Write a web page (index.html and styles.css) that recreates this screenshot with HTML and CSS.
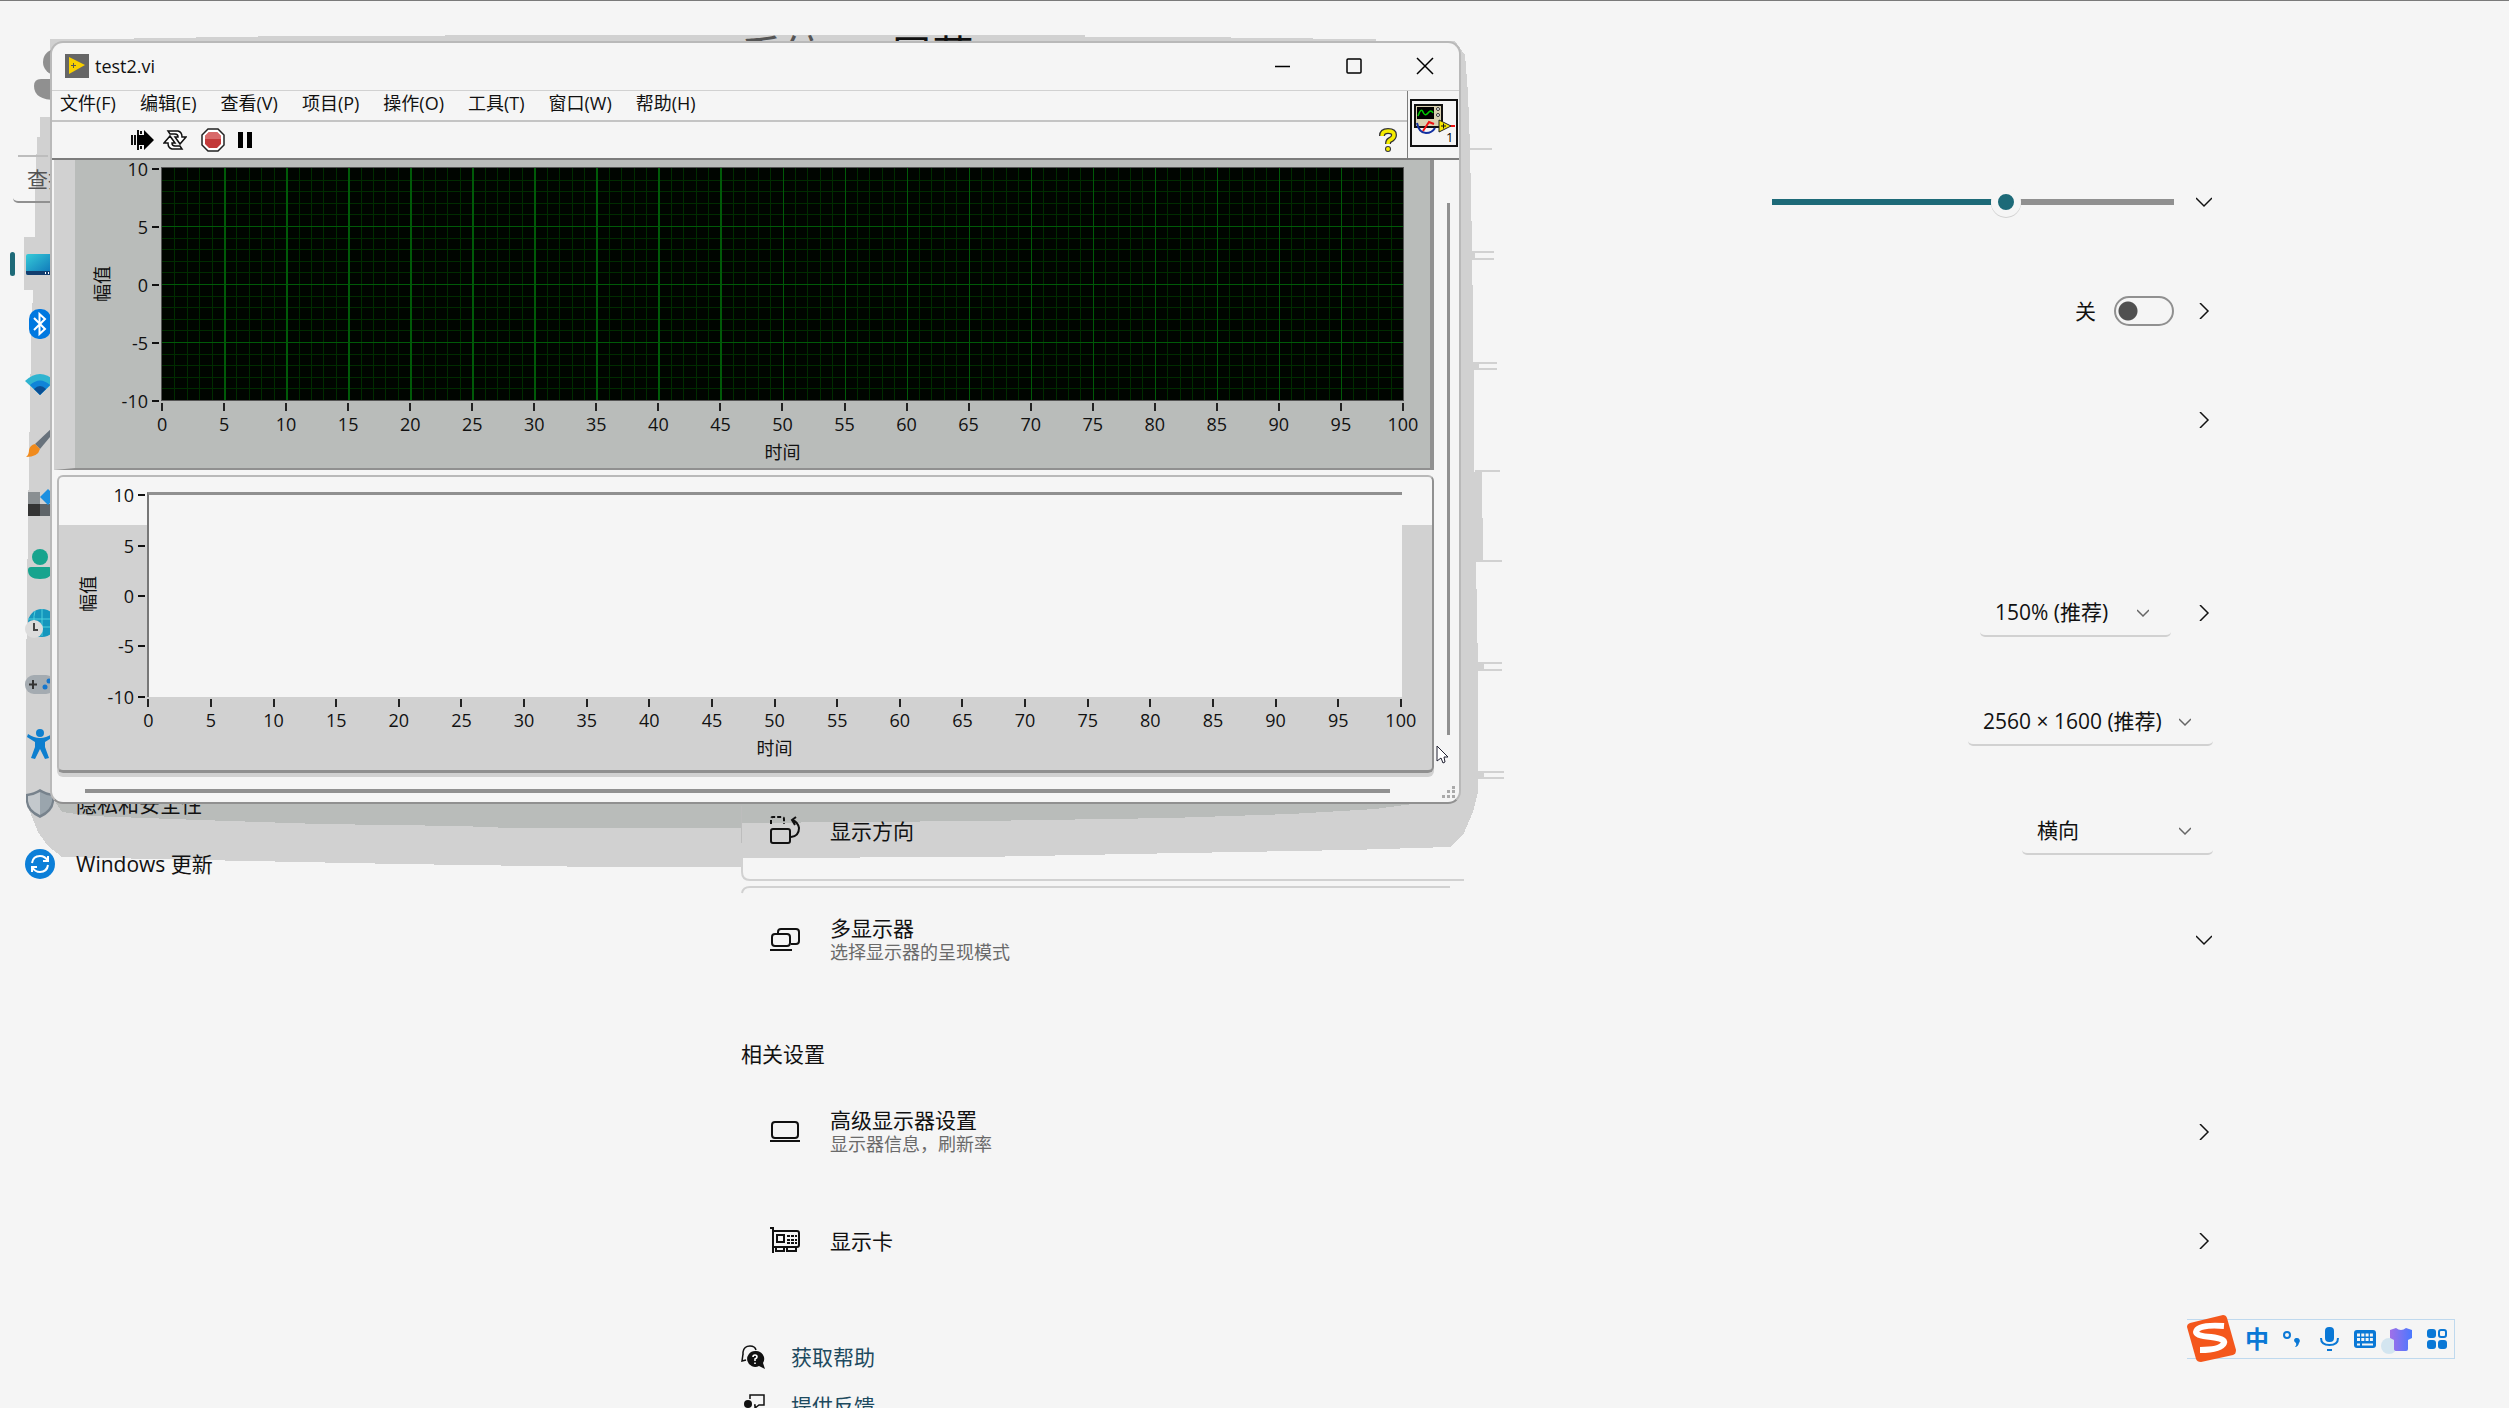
FILE: index.html
```html
<!DOCTYPE html>
<html lang="zh-CN">
<head>
<meta charset="utf-8">
<title>test2.vi</title>
<link rel="stylesheet" href="styles.css">
</head>
<body>
<svg class="shade" width="1520" height="900" viewBox="0 0 1520 900" aria-hidden="true" shape-rendering="crispEdges">
  <path fill="#d1d1d1" d="M93 39H134V38H196V37H258V36H445V35H1085V37H1231V38H1313V39H1376V41H1455L1465 55L1468 93L1470 148L1472 245L1474 400V472H1482L1483 561H1476L1478 670V792L1473 812L1463 835L1450 847L1350 850L1130 854L980 857L742 858V867H600L400 864L200 860L62 857L48 846L38 832L30 812L26 800V680L28 520L31 345L33 290H24V237H35V205L37 137H40V117H50V39Z"/>
  <path fill="#b9bcba" d="M56 803H1420L1375 809L1290 814L1170 818L980 821L742 823V828H510L460 826L320 824L200 820L90 816L62 812Z"/>
  <path fill="none" stroke="#d1d1d1" stroke-width="2" d="M1463 149H1492M1468 252H1494M1468 259H1494M1472 363H1497M1472 369H1497M1475 471H1500M1475 561H1502M1475 663H1502M1475 670H1502M1475 772H1504M1475 778H1504"/>
  <path fill="#d1d1d1" d="M1468 252h7v6h-7zM1472 363h7v6h-7zM1476 663h8v6h-8zM1476 772h8v6h-8z"/>
  <path fill="#f5f5f5" d="M743 858H780V878H743Z"/>
  <path fill="none" stroke="#bdbdbd" stroke-width="1" d="M741.500 806V843"/>
  <path fill="none" stroke="#d1d1d1" stroke-width="2" shape-rendering="auto" d="M742 858V872Q742 880 750 880H1464M742 893Q743 887 750 887H1450"/>
  <path fill="none" stroke="#bdbdbd" stroke-width="2" d="M18 156H48"/>
</svg>

<div class="settings">
  <aside class="sidebar">
    <svg class="avatar" width="44" height="50" viewBox="0 0 44 50" fill="#909090"><circle cx="22" cy="12" r="13"/><path d="M0 36Q0 29 7 29H37Q44 29 44 36Q44 50 22 50Q0 50 0 36Z"/></svg>
    <input class="search" type="text" value="查找设置" aria-label="查找设置">
    <nav class="nav">
      <a class="nav-item current" href="#"><svg width="30" height="30" viewBox="0 0 30 30"><defs><linearGradient id="g1" x2="1" y2="1"><stop stop-color="#36cbd8"/><stop offset="1" stop-color="#0a6cb5"/></linearGradient></defs><rect x="1" y="5" width="28" height="21" rx="2" fill="url(#g1)"/><path fill="#123d6e" d="M1 22H29V24Q29 26 27 26H3Q1 26 1 24Z"/><path fill="#fff" d="M20 23h1v2h-1zM23 23h1v2h-1z"/></svg></a>
      <a class="nav-item" href="#"><svg width="30" height="30" viewBox="0 0 30 30"><rect x="4" y="0" width="22" height="30" rx="10" fill="#0078e0"/><path d="M9 9L20 20L14.500 25V5L20 10L9 21" fill="none" stroke="#fff" stroke-width="2"/></svg></a>
      <a class="nav-item" href="#"><svg width="30" height="30" viewBox="0 0 30 30"><path fill="#2fb4d0" d="M0 12Q15 -2 30 12L15 26Z"/><path fill="#1084d8" d="M5 16Q15 7 25 16L15 26Z"/><path fill="#0b4f93" d="M9 20Q15 14 21 20L15 26Z"/></svg></a>
      <a class="nav-item" href="#"><svg width="30" height="30" viewBox="0 0 30 30"><path fill="#68727c" d="M28 -2L30 2L15 20L10 15Z"/><path fill="#f08a1c" d="M10 15L15 20Q13 28 1 28Q4 26 4 21Q5 16 10 15Z"/></svg></a>
      <a class="nav-item" href="#"><svg width="30" height="30" viewBox="0 0 30 30"><path fill="#8a8f92" d="M3 3H15V15H3Z"/><path fill="#343434" d="M3 15H15V27H3Z"/><path fill="#5e6468" d="M15 15H28V27H15Z"/><path fill="#1d90e0" d="M15 8L23 0L31 8L23 16Z"/></svg></a>
      <a class="nav-item" href="#"><svg width="30" height="30" viewBox="0 0 30 30" fill="#17a48e"><circle cx="15" cy="8" r="8"/><path d="M3 21Q3 18 6 18H24Q27 18 27 21Q27 30 15 30Q3 30 3 21Z"/></svg></a>
      <a class="nav-item" href="#"><svg width="30" height="30" viewBox="0 0 30 30"><circle cx="17" cy="14" r="14" fill="#1596bd"/><path d="M3 10H31M4 18H31M17 0V27M10 2Q7 12 12 26" stroke="#4fd0dd" fill="none"/><circle cx="9" cy="20" r="9" fill="#dcdcdc"/><path d="M9 14V21H13" stroke="#444" stroke-width="2" fill="none"/></svg></a>
      <a class="nav-item" href="#"><svg width="30" height="30" viewBox="0 0 30 30"><rect x="0" y="6" width="30" height="19" rx="9" fill="#a4abb1"/><path d="M4 15.500H12M8 11V20" stroke="#333" stroke-width="2"/><circle cx="20" cy="18" r="2.500" fill="#1676cc"/><circle cx="24" cy="12" r="2.500" fill="#1676cc"/></svg></a>
      <a class="nav-item" href="#"><svg width="30" height="30" viewBox="0 0 30 30" fill="#0d7fcf"><circle cx="15" cy="4" r="4"/><path d="M3 5Q9 9 15 9Q21 9 27 5L28 8L20 13V18L24 29L20 30L15 20L10 30L6 29L10 18V13L2 8Z"/></svg></a>
      <a class="nav-item" href="#"><svg width="30" height="30" viewBox="0 0 30 30"><path fill="#77828c" d="M15 0Q21 4 29 5V13Q28 23 15 29Q2 23 1 13V5Q9 4 15 0Z"/><path fill="#c3c8cc" d="M15 3V26Q4 21 3 12V7Q10 6 15 3Z"/><path fill="#9aa5ad" d="M15 3Q20 6 27 7V12Q26 21 15 26Z"/></svg>隐私和安全性</a>
      <a class="nav-item" href="#"><svg width="30" height="30" viewBox="0 0 30 30"><circle cx="15" cy="15" r="15" fill="#0c7fd8"/><path d="M7 14Q8 7 15 7Q20 7 23 12M23 7V12H18M23 16Q22 23 15 23Q10 23 7 18M7 23V18H12" fill="none" stroke="#fff" stroke-width="2"/></svg>Windows 更新</a>
    </nav>
  </aside>

  <main class="main">
    <h1 class="crumbs"><span class="crumb-parent">系统</span><span>屏幕</span></h1>
    <section class="group">
      <div class="row"><input class="slider" type="range" min="0" max="100" value="59" aria-label="亮度"><svg class="chev"><use href="#down"/></svg></div>
      <div class="row"><label class="toggle">关<input type="checkbox" role="switch"></label><svg class="chev"><use href="#right"/></svg></div>
      <div class="row"><svg class="chev"><use href="#right"/></svg></div>
    </section>
    <section class="group scale">
      <div class="row"><span class="pick"><select aria-label="缩放"><option>150% (推荐)</option></select><svg class="pick-chev"><use href="#small"/></svg></span><svg class="chev"><use href="#right"/></svg></div>
      <div class="row flush"><span class="pick wide"><select aria-label="显示分辨率"><option>2560 × 1600 (推荐)</option></select><svg class="pick-chev"><use href="#small"/></svg></span></div>
      <div class="row flush">
        <svg class="row-icon" width="30" height="30" viewBox="0 0 30 30" fill="none" stroke="#111" stroke-width="2"><rect x="1" y="13" width="19" height="14" rx="2"/><path d="M1 8V3Q1 1 3 1H12Q14 1 14 3V8" stroke-dasharray="4 2"/><path d="M21 21Q29 20 29 12Q28 6 22 4M26 1L22 4L25 9"/></svg>
        <div class="row-text"><span class="row-title">显示方向</span></div>
        <span class="pick"><select aria-label="显示方向"><option>横向</option></select><svg class="pick-chev"><use href="#small"/></svg></span>
      </div>
      <div class="row">
        <svg class="row-icon" width="30" height="30" viewBox="0 0 30 30" fill="none" stroke="#111" stroke-width="2"><path d="M8 9V7Q8 4 11 4H26Q29 4 29 7V16Q29 19 26 19H21"/><rect x="2" y="9" width="18" height="12" rx="3"/><path d="M0 25H22"/></svg>
        <div class="row-text"><span class="row-title">多显示器</span><span class="row-sub">选择显示器的呈现模式</span></div>
        <svg class="chev"><use href="#down"/></svg>
      </div>
    </section>
    <h2 class="group-title">相关设置</h2>
    <section class="group">
      <div class="row">
        <svg class="row-icon" width="30" height="30" viewBox="0 0 30 30" fill="none" stroke="#111" stroke-width="2"><rect x="2" y="5" width="26" height="16" rx="3"/><path d="M0 24H30"/></svg>
        <div class="row-text"><span class="row-title">高级显示器设置</span><span class="row-sub">显示器信息，刷新率</span></div>
        <svg class="chev"><use href="#right"/></svg>
      </div>
      <div class="row">
        <svg class="row-icon" width="30" height="30" viewBox="0 0 30 30" fill="none" stroke="#111" stroke-width="2"><path d="M0 2H3V27M3 5H27Q29 5 29 7V19Q29 21 27 21H3M6 21V25H14V21M17 21V25H26V21"/><rect x="7" y="9" width="7" height="7"/><path d="M17 10H27M17 14H27M17 17H27" stroke-dasharray="3 1"/></svg>
        <div class="row-text"><span class="row-title">显示卡</span></div>
        <svg class="chev"><use href="#right"/></svg>
      </div>
    </section>
    <div class="links">
      <a class="help" href="#"><svg width="24" height="24" viewBox="0 0 24 24"><path d="M2 10V7Q3 1 9 1Q14 1 15 5M2 9L1 16L5 15" fill="none" stroke="#111" stroke-width="1.500"/><path fill="#111" d="M14 6A8 8 0 1 0 18 21L24 24L22 18A8 8 0 0 0 14 6Z"/><path d="M12 12Q12 10 14 10Q16 10 16 12Q16 13 14 14V16M14 17.500V19" stroke="#fff" stroke-width="1.600" fill="none"/></svg>获取帮助</a>
      <a class="help" href="#"><svg width="24" height="24" viewBox="0 0 24 24"><path d="M9 5V1H23V11H18L14 14V11H13" fill="none" stroke="#111" stroke-width="1.500"/><circle cx="7" cy="10" r="4" fill="#111"/><path fill="#111" d="M1 16H13V20Q10 23 7 23Q3 23 1 20Z"/></svg>提供反馈</a>
    </div>
  </main>
</div>

<section class="window">
  <header class="titlebar">
    <svg width="24" height="24" viewBox="0 0 24 24"><path fill="#666" d="M0 0H24V24H0Z"/><path fill="#f8d000" d="M4 3L20 11L4 20Z"/><path d="M6 11.500H11M8.500 9V14" stroke="#555"/></svg>
    <span class="title">test2.vi</span>
    <button aria-label="最小化"><svg width="16" height="16" viewBox="0 0 16 16"><path d="M0 8.500H15"/></svg></button>
    <button aria-label="最大化"><svg width="16" height="16" viewBox="0 0 16 16"><rect x="1" y="1" width="14" height="14" rx="1"/></svg></button>
    <button aria-label="关闭"><svg width="16" height="16" viewBox="0 0 16 16"><path d="M0 0L16 16M16 0L0 16"/></svg></button>
  </header>
  <div class="bars">
    <div class="bars-left">
      <div class="menubar"><button>文件(F)</button><button>编辑(E)</button><button>查看(V)</button><button>项目(P)</button><button>操作(O)</button><button>工具(T)</button><button>窗口(W)</button><button>帮助(H)</button></div>
      <div class="toolbar">
        <button aria-label="运行"><svg width="24" height="24" viewBox="0 0 24 24"><path d="M1 7V17M4 7V17M7 2V7M7 17V22M10 3V6M10 18V21" stroke="#111" stroke-width="2"/><path d="M6 7H13V2L23 12L13 22V17H6Z" fill="#000"/></svg></button>
        <button class="loop" aria-label="连续运行"><svg width="24" height="24" viewBox="0 0 24 24" fill="#fff" stroke="#111" stroke-width="1.500"><path d="M5 3H15Q19 4 19 9H23L17 16L12 9H15Q15 6 12 6H7Z"/><path d="M19 21H9Q5 20 5 15H1L7 8L12 15H9Q9 18 12 18H17Z"/></svg></button>
        <button class="stop" aria-label="中止"><svg width="24" height="24" viewBox="0 0 24 24"><path d="M7 1H17L23 7V17L17 23H7L1 17V7Z" fill="#fff" stroke="#222" stroke-width="1.500"/><path d="M8 4H16L20 8V16L16 20H8L4 16V8Z" fill="#c23a3a"/><path d="M8 4H16L20 8V11H4V8Z" fill="#d86a6a"/></svg></button>
        <button aria-label="暂停"><svg width="16" height="16" viewBox="0 0 16 16"><path d="M1 0H6V16H1ZM10 0H15V16H10Z" fill="#000"/></svg></button>
        <button class="hint" aria-label="即时帮助"><svg width="18" height="24" viewBox="0 0 18 24" fill="none"><path d="M3 8Q3 3 9 3Q15 3 15 7Q15 10 11 12Q9 13 9 16" stroke="#333" stroke-width="6"/><circle cx="9" cy="21" r="3" fill="#333"/><path d="M3 8Q3 3 9 3Q15 3 15 7Q15 10 11 12Q9 13 9 16" stroke="#f5ec00" stroke-width="3.500"/><circle cx="9" cy="21" r="2" fill="#f5ec00"/></svg></button>
      </div>
    </div>
    <div class="vi-box"><svg width="48" height="48" viewBox="0 0 48 48"><rect x="1" y="1" width="46" height="46" fill="#f5f5f5" stroke="#111" stroke-width="2"/><rect x="5" y="6" width="27" height="22" fill="#d8d0b0" stroke="#111" stroke-width="2"/><rect x="7" y="8" width="17" height="12" fill="#000"/><path d="M8 17Q11 8 13 13T18 14T23 14" stroke="#0c0" stroke-width="1.500" fill="none"/><circle cx="28" cy="10" r="1.500" fill="#fff" stroke="#333"/><circle cx="28" cy="16" r="1.500" fill="#fff" stroke="#333"/><path d="M7 24Q9 34 16 34Q22 34 25 29" stroke="#1230a0" stroke-width="2" fill="none"/><path d="M13 32L19 23L24 25M40 27H45" stroke="#e11" stroke-width="2" fill="none"/><path d="M29 21L41 27L29 33Z" fill="#f5e500" stroke="#222"/><path d="M31 27H36M33.500 24.500V29.500" stroke="#111"/><text x="36" y="43" class="vi-num">1</text></svg></div>
  </div>
  <div class="canvas">
    <div class="panel">
      <figure class="chart chart-dark">
        <div class="ytitle">幅值</div>
        <div class="ylabels"><span>10</span><span>5</span><span>0</span><span>-5</span><span>-10</span></div>
        <div class="plot"><svg viewBox="0 0 100 20" preserveAspectRatio="none" fill="none" shape-rendering="crispEdges">
          <path d="M1 10H100" stroke="#002c00" stroke-width="20" stroke-dasharray=".08 .92"/>
          <path d="M50 1V20" stroke="#002c00" stroke-width="100" stroke-dasharray=".09 .91"/>
          <path d="M5 10H100" stroke="#005a08" stroke-width="20" stroke-dasharray=".12 4.880"/>
          <path d="M50 5V20" stroke="#005a08" stroke-width="100" stroke-dasharray=".12 4.880"/></svg></div>
        <div class="xlabels"><span>0</span><span>5</span><span>10</span><span>15</span><span>20</span><span>25</span><span>30</span><span>35</span><span>40</span><span>45</span><span>50</span><span>55</span><span>60</span><span>65</span><span>70</span><span>75</span><span>80</span><span>85</span><span>90</span><span>95</span><span>100</span></div>
        <figcaption>时间</figcaption>
      </figure>
      <figure class="chart chart-light">
        <div class="ytitle">幅值</div>
        <div class="ylabels"><span>10</span><span>5</span><span>0</span><span>-5</span><span>-10</span></div>
        <div class="plot"></div>
        <div class="xlabels"><span>0</span><span>5</span><span>10</span><span>15</span><span>20</span><span>25</span><span>30</span><span>35</span><span>40</span><span>45</span><span>50</span><span>55</span><span>60</span><span>65</span><span>70</span><span>75</span><span>80</span><span>85</span><span>90</span><span>95</span><span>100</span></div>
        <figcaption>时间</figcaption>
      </figure>
      <div class="hscroll"></div>
    </div>
    <div class="vscroll"><svg class="grip" width="14" height="12" viewBox="0 0 14 12" fill="#aaa"><path d="M10 0h3v3h-3zM5 4h3v3h-3zM10 4h3v3h-3zM0 9h3v3h-3zM5 9h3v3h-3zM10 9h3v3h-3z"/></svg></div>
  </div>
</section>

<div class="ime">
  <svg class="ime-logo" width="50" height="48" viewBox="0 0 50 48"><path fill="#f4571c" d="M3 8L36 0Q39 0 40 3L49 35Q49 39 46 40L14 47Q10 47 9 44L0 12Q0 9 3 8Z"/><path d="M37 11Q10 9 9 17Q9 21 24 22Q39 24 37 28Q34 35 13 35" fill="none" stroke="#fff" stroke-width="6"/></svg>
  <button class="ime-text">中</button>
  <button aria-label="标点"><svg viewBox="0 0 24 24"><circle cx="6" cy="8" r="3" fill="none" stroke="#0a78d6" stroke-width="2"/><path fill="#0a78d6" d="M13 13A3 3 0 1 1 18 16Q17 20 14 20Q16 18 15 16Q13 15 13 13Z"/></svg></button>
  <button aria-label="语音"><svg viewBox="0 0 24 24"><rect x="8" y="0" width="9" height="15" rx="4" fill="#0a78d6"/><path d="M4 11Q4 18 12.500 18Q21 18 21 11M10 23H15" fill="none" stroke="#0a78d6" stroke-width="2"/></svg></button>
  <button aria-label="键盘"><svg viewBox="0 0 24 24"><rect x="1" y="3" width="22" height="18" rx="3" fill="#0a78d6"/><path d="M4 8H20M4 12.500H20" stroke="#f5f5f5" stroke-width="3" stroke-dasharray="3 1.300"/><path d="M4 17.500H7M9 17.500H20" stroke="#f5f5f5" stroke-width="2"/></svg></button>
  <button class="skin" aria-label="皮肤"><svg viewBox="0 0 24 24"><defs><linearGradient id="g2"><stop stop-color="#a070e8"/><stop offset="1" stop-color="#4a78ff"/></linearGradient></defs><circle cx="0" cy="19" r="8" fill="#d3e5f0"/><path fill="url(#g2)" d="M1 3L7 1Q12 5 17 1L23 3V11L19 13V22Q19 24 17 24H8Q5 24 5 22V13L1 11Z"/></svg></button>
  <button aria-label="工具箱"><svg viewBox="0 0 24 24"><g fill="#0a78d6"><rect x="2" y="2" width="9" height="9" rx="3"/><rect x="2" y="13" width="9" height="9" rx="3"/><rect x="13" y="13" width="9" height="9" rx="3"/></g><rect x="14" y="3" width="7" height="7" rx="2" fill="none" stroke="#0a78d6" stroke-width="2"/></svg></button>
</div>

<svg class="cursor" width="13" height="20" viewBox="0 0 13 20"><path d="M1 1V16L5 13L7 18L9 17L8 12H12Z" fill="#fff" stroke="#223" stroke-width="1"/></svg>

<svg class="defs" width="0" height="0">
  <symbol id="down" viewBox="0 0 16 16"><path d="M0 4L8 12L16 4" fill="none" stroke="#111" stroke-width="1.500"/></symbol>
  <symbol id="right" viewBox="0 0 16 16"><path d="M4 0L12 8L4 16" fill="none" stroke="#111" stroke-width="1.500"/></symbol>
  <symbol id="small" viewBox="0 0 12 12"><path d="M0 3L6 9L12 3" fill="none" stroke="#666" stroke-width="1.500"/></symbol>
</svg>
</body>
</html>
```
FILE: styles.css
```css
* { box-sizing: border-box; }
html { height: 100%; overflow: hidden; }
body {
  margin: 0;
  height: 100%;
  overflow: hidden;
  position: relative;
  background: #f5f5f5;
  border-top: 1px solid #7a7a7a;
  color: #111;
  font: 21px/24px "Open Sans", "Noto Sans CJK SC", sans-serif;
}
button, input, select { font: inherit; color: inherit; border: 0; background: none; padding: 0; margin: 0; }
a { color: inherit; text-decoration: none; }
svg { flex: none; display: block; }
.defs { position: absolute; }
.shade { position: absolute; left: 0; top: -1px; }

/* settings page */
.settings { position: relative; display: flex; }
.sidebar { flex: none; width: 741px; padding-top: 49px; }
.avatar { margin-left: 34px; }
.search {
  display: block;
  width: 700px;
  height: 48px;
  margin: 55px 0 31px 13px;
  padding-left: 14px;
  color: #555;
  border-bottom: 2px solid #909090;
  border-radius: 5px;
}
.nav { display: flex; flex-direction: column; }
.nav-item {
  position: relative;
  display: flex;
  align-items: center;
  gap: 21px;
  height: 60px;
  padding-left: 25px;
}
.current::before {
  content: "";
  position: absolute;
  left: 10px;
  width: 5px;
  height: 24px;
  border-radius: 3px;
  background: #1d6a78;
}
.main { flex: 1; min-width: 0; padding: 24px 274px 0 0; }
.crumbs { display: flex; gap: 65px; margin: 0 0 62px; font-size: 42px; line-height: 60px; font-weight: 400; }
.crumb-parent { color: #555; }
.row {
  display: flex;
  align-items: center;
  justify-content: flex-end;
  gap: 22px;
  height: 109px;
  padding: 0 23px 0 29px;
}
.flush { padding-right: 22px; }
.scale { margin-top: 84px; }
.chev { width: 16px; height: 16px; overflow: visible; }
.row-icon { margin-right: 8px; }
.row-text { flex: 1; display: flex; flex-direction: column; }
.row-sub { font-size: 18px; color: #6a6a6a; }
.slider {
  appearance: none;
  width: 402px;
  height: 30px;
  background: linear-gradient(to right, #1d6a78 58%, #909090 58%) center / 100% 6px no-repeat;
}
.slider::-webkit-slider-thumb {
  appearance: none;
  width: 30px;
  height: 30px;
  border-radius: 50%;
  border: 7px solid #f5f5f5;
  background: #1d6a78;
  box-shadow: 0 1px #d1d1d1;
}
.toggle { display: flex; align-items: center; gap: 18px; }
.toggle input {
  appearance: none;
  width: 60px;
  height: 30px;
  border: 2px solid #909090;
  border-radius: 15px;
  background: radial-gradient(circle 9px at 12px 13px, #505050 9px, transparent 10px);
}
.pick { position: relative; display: block; width: 191px; }
.pick.wide { width: 245px; }
.pick select {
  appearance: none;
  width: 100%;
  height: 48px;
  padding-left: 15px;
  border-bottom: 2px solid #d1d1d1;
  border-radius: 5px;
}
.row:not(.flush) .pick { margin-right: 3px; }
.pick-chev { position: absolute; right: 22px; top: 18px; width: 12px; height: 12px; overflow: visible; pointer-events: none; }
.group-title { margin: 48px 0 11px; font-size: 21px; line-height: 24px; font-weight: 400; }
.links { display: flex; flex-direction: column; gap: 25px; padding-top: 50px; }
.help { display: flex; align-items: center; gap: 26px; color: #1d4a5f; }

/* application window */
.window {
  position: absolute;
  left: 50px;
  top: 40px;
  width: 1411px;
  display: flex;
  flex-direction: column;
  background: #f5f5f5;
  border: 2px solid #b9b9b9;
  border-bottom-color: #909090;
  border-radius: 13px;
  overflow: hidden;
  font-size: 18px;
}
.titlebar { display: flex; align-items: center; height: 47px; padding: 0 26px 1px 13px; }
.title { flex: 1; margin-left: 6px; }
.titlebar button { margin-left: 55px; }
.titlebar button svg { fill: none; stroke: #000; stroke-width: 1.5; overflow: visible; }
.bars { display: flex; border-top: 1px solid #d1d1d1; border-bottom: 2px solid #7c7c7c; }
.bars-left { flex: 1; border-right: 1px solid #7c7c7c; }
.menubar { display: flex; gap: 24px; height: 31px; padding: 0 0 5px 8px; border-bottom: 2px solid #c4c4c4; }
.toolbar { display: flex; align-items: center; height: 36px; padding: 0 10px 0 79px; }
.loop { margin-left: 8px; }
.stop { margin: 0 12px 0 14px; }
.hint { margin-left: auto; }
.vi-box { width: 51px; padding-bottom: 3px; display: flex; align-items: center; justify-content: center; }
.vi-num { font-size: 13px; }
.canvas { display: flex; }
.panel { flex: 1; padding: 0 0 9px 2px; }
.chart {
  display: grid;
  grid-template-columns: 36px 41px 1fr;
  margin: 0;
}
.chart-dark {
  grid-template-rows: 234px 36px 31px;
  padding: 7px 26px 0 9px;
  background: #b9bcba;
  border-left: 21px solid #d1d1d1;
  border-right: 4px solid #909090;
  border-bottom: 2px solid #909090;
}
.chart-light {
  grid-template-rows: 205px 36px 35px;
  margin: 5px 0 16px 3px;
  padding: 15px 30px 2px 11px;
  background: linear-gradient(#f5f5f5 48px, #d1d1d1 48px);
  border: 2px solid #b9b9b9;
  border-right-color: #909090;
  border-bottom: 3px solid #909090;
  border-radius: 6px;
  box-shadow: 0 4px #d1d1d1;
}
.ytitle {
  writing-mode: vertical-rl;
  text-orientation: sideways;
  transform: rotate(180deg);
  text-align: center;
  line-height: 36px;
}
.ylabels { display: flex; flex-direction: column; }
.chart-dark .ylabels { margin: -27px 0 -29px; }
.chart-light .ylabels { margin: -22px 0 -25px; }
.ylabels span { flex: 1; display: flex; align-items: center; justify-content: flex-end; }
.ylabels span::after { content: ""; width: 7px; height: 2px; margin: 0 2px 0 4px; background: #111; }
.plot { min-width: 0; }
.chart-dark .plot { background: #000500; border: 1px solid #555; }
.plot svg { width: 100%; height: 100%; }
.chart-light .plot { background: #f5f5f5; border-top: 3px solid #909090; border-left: 2px solid #777; }
.xlabels { grid-column: 3; display: flex; margin: 0 -30px; padding-top: 2px; }
.xlabels span { flex: 1 1 0; width: 0; display: flex; flex-direction: column; align-items: center; line-height: 26px; }
.xlabels span::before { content: ""; width: 2px; height: 8px; background: #222; }
figcaption { grid-column: 3; text-align: center; line-height: 31px; }
.hscroll { height: 4px; margin: 0 44px 0 31px; background: #909090; }
.vscroll {
  width: 25px;
  padding: 43px 0 4px 4px;
  display: flex;
  flex-direction: column;
  align-items: center;
  gap: 51px;
}
.vscroll::before { content: ""; flex: 1; width: 3px; background: #909090; }
.cursor { position: absolute; left: 1436px; top: 744px; }

/* input method bar */
.ime {
  position: absolute;
  right: 54px;
  bottom: 49px;
  display: flex;
  align-items: center;
  gap: 12px;
  height: 40px;
  padding-right: 5px;
  border: 1px solid #bfd9ee;
  border-left: 0;
}
.ime-logo { margin-right: -4px; }
.ime button { width: 24px; height: 24px; }
.ime .ime-text { color: #0a78d6; font-weight: 700; font-size: 24px; }
.ime button svg { width: 24px; height: 24px; overflow: visible; }
```
